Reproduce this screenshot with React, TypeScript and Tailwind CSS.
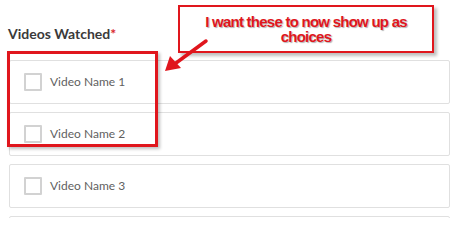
export default function App() {
  const videos = ['Video Name 1', 'Video Name 2', 'Video Name 3', 'Video Name 4'];

  return (
    <div className="relative h-[218px] w-[474px] overflow-hidden bg-white font-['Lato',sans-serif]">
      {/* Form field */}
      <div className="flex flex-col pl-[9px] pr-[24px] pt-[24px]">
        <h3 className="ml-[-1px] text-[14px] font-bold leading-[20px] text-[#3a3a3a]">
          Videos Watched<span className="text-[#d9252b]">*</span>
        </h3>
        <div className="mt-[16px] flex flex-col gap-[8px]">
          {videos.map((v) => (
            <label
              key={v}
              className="flex h-[44px] items-center gap-[8px] rounded-[2px] border border-[#e0e0e0] bg-white pl-[14px]"
            >
              <span className="h-[18px] w-[18px] rounded-[1px] border-2 border-[#d2d2d2] bg-white" />
              <span className="text-[12px] text-[#5f5f5f]">{v}</span>
            </label>
          ))}
        </div>
      </div>

      {/* Annotation: highlight box */}
      <div className="absolute left-[7px] top-[51px] h-[96px] w-[151px] border-[3px] border-[#e0161d] shadow-[2px_2px_3px_rgba(0,0,0,0.25)]" />

      {/* Annotation: callout */}
      <div className="absolute left-[178px] top-[5px] flex h-[48px] w-[256px] flex-col items-center justify-center border-2 border-[#e0161d] bg-white shadow-[3px_3px_3px_rgba(0,0,0,0.25)]">
        <p className="text-center font-['Liberation_Sans',sans-serif] text-[15px] font-bold leading-[15px] tracking-[-0.75px] text-[#e0161d] [text-shadow:1px_1px_1px_rgba(0,0,0,0.3)]">
          I want these to now show up as
          <br />
          choices
        </p>
      </div>

      {/* Annotation: arrow */}
      <svg className="absolute left-0 top-0" width="474" height="218" viewBox="0 0 474 218">
        <line x1="206" y1="41" x2="176" y2="63" stroke="#e0161d" strokeWidth="3.5" strokeLinecap="round" />
        <polygon points="165,71 170,56 181,68" fill="#e0161d" />
      </svg>
    </div>
  );
}
